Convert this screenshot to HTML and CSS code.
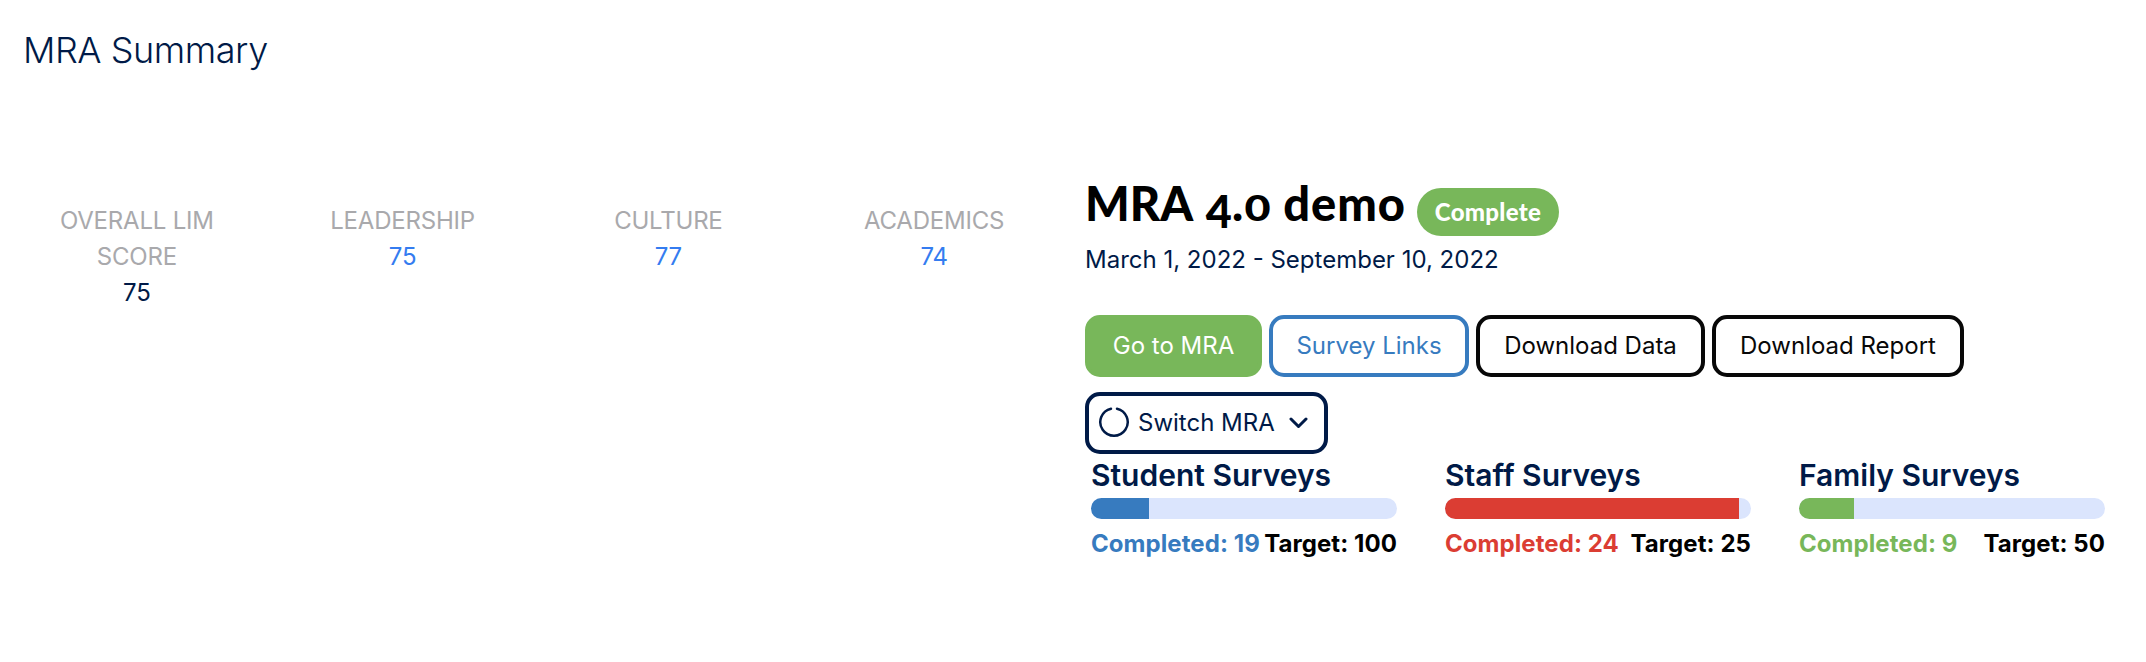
FILE: index.html
```html
<!DOCTYPE html>
<html lang="en">
<head>
<meta charset="utf-8">
<title>MRA Summary</title>
<link rel="stylesheet" href="styles.css">
</head>
<body>
<h1 class="page-title">MRA Summary</h1>
<main class="summary">
  <section class="scores">
    <div class="score"><div class="score-label">OVERALL LIM SCORE</div><div class="score-value overall">75</div></div>
    <div class="score"><div class="score-label">LEADERSHIP</div><div class="score-value">75</div></div>
    <div class="score"><div class="score-label">CULTURE</div><div class="score-value">77</div></div>
    <div class="score"><div class="score-label">ACADEMICS</div><div class="score-value">74</div></div>
  </section>
  <section class="details">
    <div class="heading"><h2 class="name">MRA <span class="digit-low">4</span>.<span class="digit-small">0</span> <span class="word">demo</span></h2><span class="badge">Complete</span></div>
    <p class="dates">March 1, 2022 - September 10, 2022</p>
    <div class="actions">
      <button class="btn btn-go">Go to MRA</button>
      <button class="btn btn-links">Survey Links</button>
      <button class="btn btn-data">Download Data</button>
      <button class="btn btn-report">Download Report</button>
      <button class="btn btn-switch">
        <svg class="ring" viewBox="0 0 32 32"><path d="M13 2.7A13.7 13.7 0 1 0 19 2.7"/></svg>
        <span>Switch MRA</span>
        <svg class="chevron" viewBox="0 0 19 12"><path d="M2 2l7.5 7.5L17 2"/></svg>
      </button>
    </div>
    <div class="surveys">
      <div class="survey student">
        <h3 class="survey-title">Student Surveys</h3>
        <div class="track"><div class="fill" style="width:19%"></div></div>
        <div class="counts"><span class="completed">Completed: 19</span><span>Target: 100</span></div>
      </div>
      <div class="survey staff">
        <h3 class="survey-title">Staff Surveys</h3>
        <div class="track"><div class="fill" style="width:96%"></div></div>
        <div class="counts"><span class="completed">Completed: 24</span><span>Target: 25</span></div>
      </div>
      <div class="survey family">
        <h3 class="survey-title">Family Surveys</h3>
        <div class="track"><div class="fill" style="width:18%"></div></div>
        <div class="counts"><span class="completed">Completed: 9</span><span>Target: 50</span></div>
      </div>
    </div>
  </section>
</main>
</body>
</html>
```
FILE: styles.css
```css
* { box-sizing: border-box; }
body { margin: 0; background: #fff; color: #001a47; font-family: Inter, sans-serif; font-size: 24px; font-weight: 400; line-height: 36px; }
h1, h2, h3, p { margin: 0; }
.page-title { padding: 28px 0 0 23px; font-size: 36px; font-weight: 300; line-height: 44px; letter-spacing: -0.45px; }
.summary { display: grid; grid-template-columns: 1063px 1fr; padding: 103px 0 0 4px; }
.scores { display: grid; grid-template-columns: repeat(4, 1fr); padding-top: 28px; text-align: center; align-content: start; letter-spacing: -0.2px; }
.score { padding: 0 45px; }
.score-label { color: #a9a9ac; }
.score-value { color: #347cf0; }
.score-value.overall { color: #001a47; }
.details { padding-left: 18px; }
.heading { display: flex; height: 66px; }
.name { width: 332px; color: #000; font-family: Lato, sans-serif; font-size: 47px; font-weight: 900; line-height: 56px; white-space: nowrap; }
/* Old-style figures: the 4 descends, the 0 sits at x-height */
.digit-low { display: inline-block; margin-left: 3px; font-size: 45px; line-height: 1; vertical-align: -7px; }
.digit-small { display: inline-block; font-size: 36px; line-height: 1; transform: scaleX(1.25); margin: 0 4px; }
.word { letter-spacing: 1px; }
.badge { width: 142px; height: 48px; margin-top: 13px; border-radius: 24px; background: #78b75a; color: #fff; font-family: Lato, sans-serif; font-size: 24px; font-weight: 900; line-height: 47px; letter-spacing: 0.3px; text-align: center; }
.dates { height: 74px; padding-top: 1px; line-height: 36px; }
.actions { display: flex; flex-wrap: wrap; gap: 15px 7px; }
.btn { display: flex; align-items: center; justify-content: center; height: 62px; padding: 0; border: 4px solid; border-radius: 15px; background: #fff; font: 400 24px/36px Inter, sans-serif; white-space: nowrap; }
.btn-go { width: 177px; border-color: #78b75a; background: #78b75a; color: #fff; }
.btn-links { width: 200px; color: #377bbf; }
.btn-data { width: 229px; color: #080808; }
.btn-report { width: 252px; color: #080808; }
.btn-switch { width: 243px; justify-content: flex-start; padding-left: 9px; color: #001a47; }
.ring { width: 32px; height: 32px; margin: 0 8px 3px 0; }
.chevron { width: 19px; height: 12px; margin-left: 14px; }
.ring path, .chevron path { fill: none; stroke: currentColor; stroke-width: 2.5; stroke-linecap: round; stroke-linejoin: round; }
.chevron path { stroke-width: 3; }
.surveys { display: grid; grid-template-columns: repeat(3, 306px); column-gap: 48px; padding-left: 6px; }
.survey-title { height: 44px; font-size: 30px; font-weight: 600; line-height: 42px; white-space: nowrap; }
.track { height: 21px; overflow: hidden; border-radius: 11px; background: #dbe5fd; }
.fill { height: 100%; background: currentColor; }
.counts { display: flex; justify-content: space-between; margin-top: 7px; color: #000; font-weight: 700; letter-spacing: 0.07px; white-space: nowrap; }
.student .fill, .student .completed { color: #377bbf; }
.staff .fill, .staff .completed { color: #db3d33; }
.family .fill, .family .completed { color: #78b75a; }
```
